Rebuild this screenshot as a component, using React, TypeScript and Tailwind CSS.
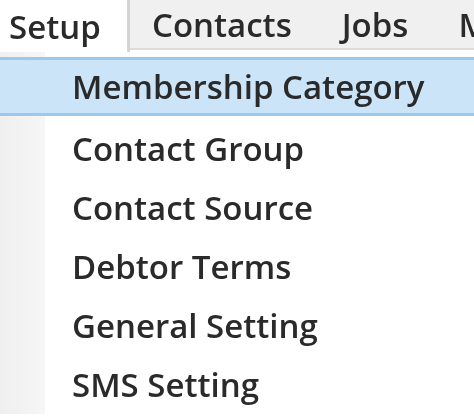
export default function App() {
  const items = ['Contact Group', 'Contact Source', 'Debtor Terms', 'General Setting', 'SMS Setting']

  return (
    <div
      className="w-[474px] h-[418px] overflow-hidden bg-white text-[#2a2a2a] text-[33px] font-semibold leading-none blur-[0.6px]"
      style={{ fontFamily: '"Open Sans", "Noto Sans", sans-serif' }}
    >
      {/* menu bar */}
      <div className="flex h-[50px] bg-[#f0f0f0] border-b-2 border-[#dcdcdc]">
        <div className="w-[130px] shrink-0 h-[52px] bg-white border-r-[3px] border-[#d4d4d4] flex items-center pl-[9px] -mb-[2px] relative z-10">
          Setup
        </div>
        <div className="flex items-center pl-[22px] gap-[50px] whitespace-nowrap">
          <span>Contacts</span>
          <span>Jobs</span>
          <span>M</span>
        </div>
      </div>

      {/* dropdown */}
      <div className="pt-[7px] relative">
        <div className="absolute left-0 top-0 bottom-0 w-[45px] bg-gradient-to-r from-[#efefef] to-[#f6f6f6]" />
        <div className="relative h-[59px] bg-[#cce4f7] border-y-[3px] border-[#99c9ef] flex items-center pl-[72px]">
          Membership Category
        </div>
        <div className="relative pt-[3px]">
          {items.map((item) => (
            <div key={item} className="h-[59px] flex items-center pl-[72px]">
              {item}
            </div>
          ))}
        </div>
      </div>
    </div>
  )
}
